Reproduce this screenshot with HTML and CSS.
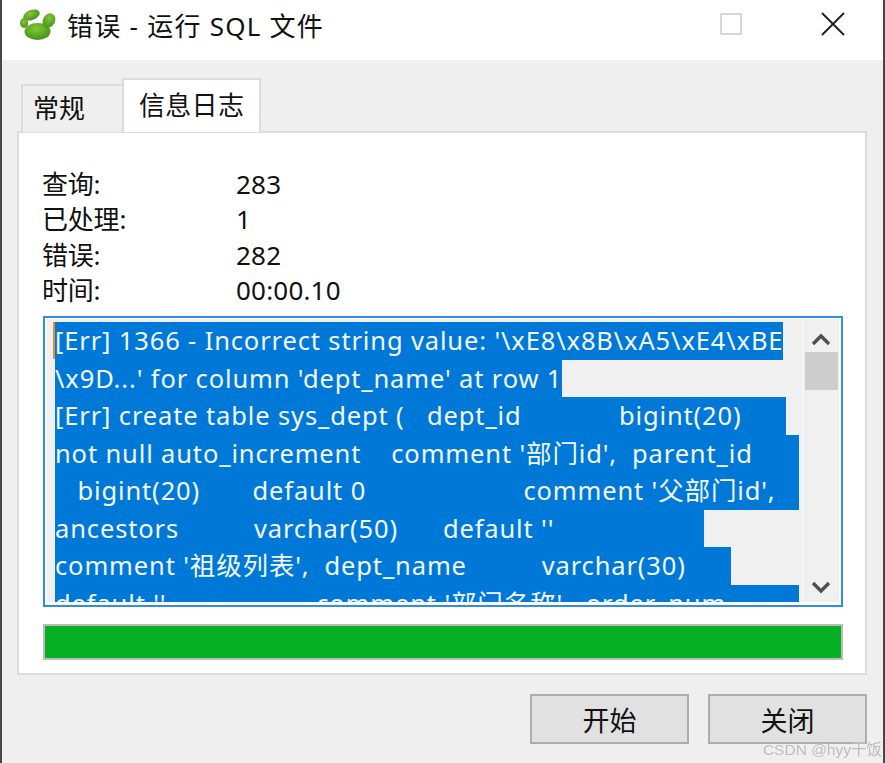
FILE: index.html
```html
<!DOCTYPE html>
<html lang="zh">
<head>
<meta charset="utf-8">
<title>错误 - 运行 SQL 文件</title>
<link rel="stylesheet" href="styles.css">
</head>
<body>
<div class="window">
  <header class="titlebar">
    <svg class="logo" width="38" height="34" viewBox="0 0 38 34"><defs><radialGradient id="g" cx="45%" cy="35%" r="70%"><stop offset="0" stop-color="#86c63a"/><stop offset="1" stop-color="#3f8f12"/></radialGradient></defs><ellipse cx="17.5" cy="23.5" rx="13" ry="8.5" fill="url(#g)"/><ellipse cx="11.5" cy="7" rx="8.5" ry="5" transform="rotate(-20 11.5 7)" fill="url(#g)"/><ellipse cx="29" cy="12.5" rx="6" ry="7.5" transform="rotate(30 29 12.5)" fill="url(#g)"/><ellipse cx="4" cy="15" rx="4" ry="5" fill="url(#g)"/></svg>
    <span class="title">错误 - 运行 SQL 文件</span>
    <div class="controls">
      <span class="max"></span>
      <svg class="close" width="24" height="24" viewBox="0 0 24 24"><path d="M1 1L23 23M23 1L1 23" stroke="#222" stroke-width="2" fill="none"/></svg>
    </div>
  </header>
  <main class="body">
    <nav class="tabs">
      <span class="tab">常规</span>
      <span class="tab active">信息日志</span>
    </nav>
    <section class="panel">
      <dl class="stats">
        <dt>查询:</dt><dd>283</dd>
        <dt>已处理:</dt><dd>1</dd>
        <dt>错误:</dt><dd>282</dd>
        <dt>时间:</dt><dd>00:00.10</dd>
      </dl>
      <div class="log">
        <div class="log-inner">
          <div class="log-text">
            <i class="caret"></i>
            <span class="ln">[Err] 1366 - Incorrect string value: '\xE8\x8B\xA5\xE4\xBE</span>
            <span class="ln">\x9D...' for column 'dept_name' at row 1</span>
            <span class="ln">[Err] create table sys_dept (   dept_id             bigint(20)      </span>
            <span class="ln full">not null auto_increment    comment '部门id',  parent_id</span>
            <span class="ln full">   bigint(20)       default 0                     comment '父部门id',</span>
            <span class="ln">ancestors          varchar(50)      default ''                    </span>
            <span class="ln">comment '祖级列表',  dept_name          varchar(30)      </span>
            <span class="ln full">default ''                    comment '部门名称',  order_num</span>
          </div>
          <div class="scroll">
            <svg width="20" height="14" viewBox="0 0 20 14"><path d="M2 11L10 3L18 11" stroke="#505050" stroke-width="3.4" fill="none"/></svg>
            <div class="thumb"></div>
            <svg class="down" width="20" height="14" viewBox="0 0 20 14"><path d="M2 3L10 11L18 3" stroke="#505050" stroke-width="3.4" fill="none"/></svg>
          </div>
        </div>
      </div>
      <div class="progress"><div class="bar"></div></div>
    </section>
    <footer class="actions">
      <button class="btn">开始</button>
      <button class="btn">关闭</button>
    </footer>
    <span class="watermark">CSDN @hyy干饭</span>
  </main>
</div>
</body>
</html>
```
FILE: styles.css
```css
* { box-sizing: border-box; }
html, body { margin: 0; padding: 0; }
body { width: 885px; height: 763px; overflow: hidden; background: #efefef; font-family: "Noto Sans", "Noto Sans CJK SC", sans-serif; color: #111; }
.window { width: 885px; height: 763px; border-left: 2px solid #4a4540; border-right: 2px solid #4a4540; display: flex; flex-direction: column; filter: blur(0.45px); }
.titlebar { height: 60px; background: #fff; display: flex; align-items: flex-start; padding: 8px 0 0 18px; flex: none; }
.logo { flex: none; }
.title { font-size: 26px; line-height: 36px; margin-left: 9px; letter-spacing: 1.25px; }
.controls { margin-left: auto; display: flex; align-items: center; padding: 4px 38px 0 0; }
.max { width: 22px; height: 22px; border: 2px solid #d8d8d8; margin-right: 79px; }
.close { display: block; }
.body { position: relative; flex: 1; display: flex; flex-direction: column; padding: 18px 16px 0 15px; background: #efefef; }
.tabs { display: flex; align-items: flex-end; height: 54px; padding-left: 4px; margin-bottom: -1px; position: relative; z-index: 1; }
.tab { height: 48px; width: 101px; border: 2px solid #dcdcdc; border-bottom: 0; border-right: 0; background: #efefef; font-size: 26px; line-height: 44px; padding-left: 10px; }
.tab.active { height: 54px; width: 139px; background: #fff; border-right: 2px solid #dcdcdc; line-height: 50px; padding-left: 15px; font-size: 26px; letter-spacing: 0.3px; }
.panel { height: 544px; background: #fff; border: 2px solid #dcdcdc; padding: 34px 22px 0 24px; display: flex; flex-direction: column; }
.stats { margin: 0 0 0 -1px; display: grid; grid-template-columns: 194px 1fr; grid-auto-rows: 35.3px; font-size: 26px; line-height: 35.3px; letter-spacing: 0.2px; }
.stats dt, .stats dd { margin: 0; }
.stats dt { letter-spacing: -0.2px; }
.log { margin-top: 8px; height: 291px; border: 2px solid #2f8fdd; flex: none; }
.log-inner { height: 100%; border: 2px solid #fff; border-top-width: 1px; border-bottom-width: 3px; background: #f0f0f0; display: flex; }
.log-text { position: relative; flex: 1; min-width: 0; padding: 3px 3px 0 8px; overflow: hidden; display: flex; flex-direction: column; align-items: flex-start; font-size: 25.5px; letter-spacing: 0.86px; }
.ln { flex: none; height: 37.5px; line-height: 37.5px; white-space: pre; background: #0078d7; color: #f2f8fd; }
.ln.full { align-self: stretch; }
.caret { position: absolute; left: 6px; top: 3px; width: 2px; height: 37px; background: #f08a30; }
.scroll { width: 37px; flex: none; display: flex; flex-direction: column; align-items: center; padding-top: 14px; border-left: 1px solid #f8f8f8; position: relative; }
.thumb { width: 33px; height: 38px; background: #cdcdcd; margin-top: 5px; }
.down { margin-top: auto; margin-bottom: 8px; }
.progress { margin-top: 17px; height: 36px; border: 2px solid #bcbcbc; background: #e6e6e6; flex: none; }
.bar { width: 100%; height: 100%; background: #06b025; }
.actions { display: flex; justify-content: flex-end; gap: 19px; margin-top: 19px; }
.btn { width: 159px; height: 50px; background: #e1e1e1; border: 2px solid #adadad; font-family: inherit; font-size: 27px; color: #111; padding: 0; }
.watermark { position: absolute; right: 1px; bottom: 4px; font-family: "Liberation Sans", "Noto Sans CJK SC", sans-serif; font-size: 15.5px; color: rgba(170,170,170,0.8); text-shadow: 0 0 1px #fff; }
```
